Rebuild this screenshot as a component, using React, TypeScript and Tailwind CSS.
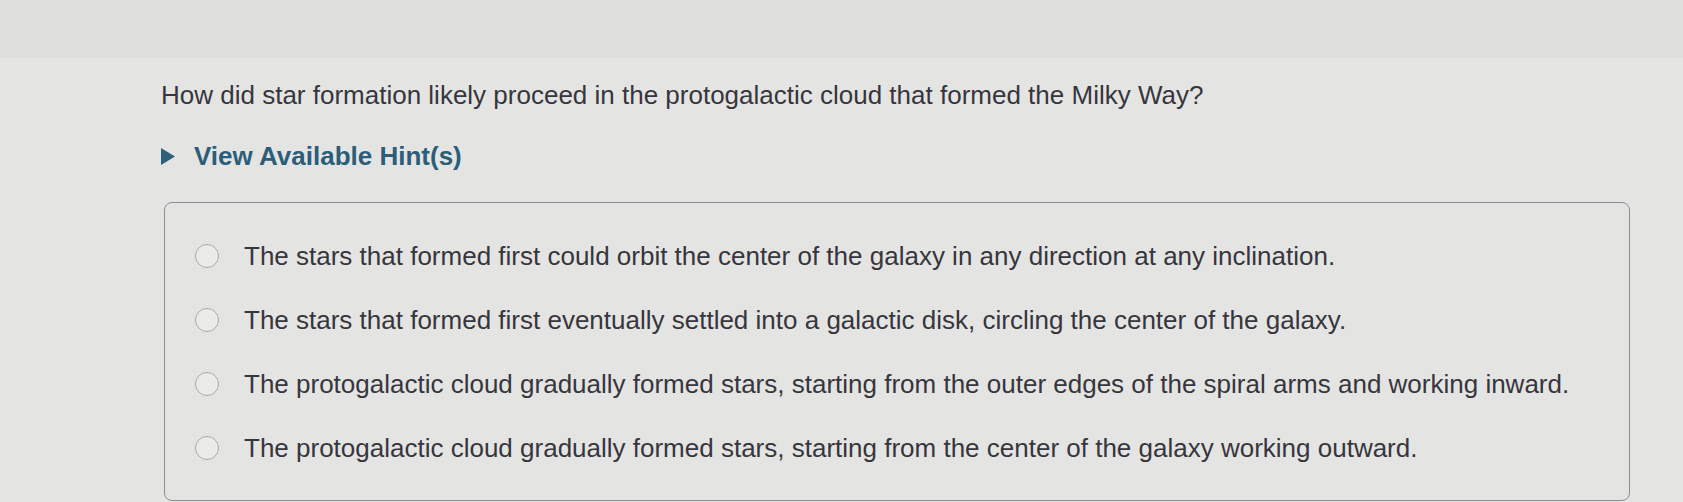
import { useState } from 'react';

const OPTIONS = [
  'The stars that formed first could orbit the center of the galaxy in any direction at any inclination.',
  'The stars that formed first eventually settled into a galactic disk, circling the center of the galaxy.',
  'The protogalactic cloud gradually formed stars, starting from the outer edges of the spiral arms and working inward.',
  'The protogalactic cloud gradually formed stars, starting from the center of the galaxy working outward.',
];

export default function App() {
  const [selected, setSelected] = useState<number | null>(null);
  const [hintsOpen, setHintsOpen] = useState(false);

  return (
    <div className="min-h-[502px] bg-[linear-gradient(to_bottom,#dedfdd_58px,#e4e5e3_58px)] font-['Liberation_Sans',Arial,sans-serif] text-[#37353d]">
      <div className="pl-[161px] pr-[52px] pt-[80px]">
        {/* Question */}
        <p className="text-[26px] leading-[30px]">
          How did star formation likely proceed in the protogalactic cloud that formed the Milky Way?
        </p>

        {/* Hints toggle */}
        <button
          className="mt-[31px] flex items-center gap-[19px] text-[26px] leading-[30px] font-bold text-[#2c5e7a] cursor-pointer"
          onClick={() => setHintsOpen(!hintsOpen)}
        >
          <svg width="14" height="17" viewBox="0 0 14 17" className={hintsOpen ? 'rotate-90' : ''}>
            <path d="M0 0L14 8.5L0 17Z" fill="#2c6179" />
          </svg>
          <span>View Available Hint(s)</span>
        </button>

        {/* Answer choices */}
        <div className="mt-[31px] ml-[3px] w-[1466px] rounded-lg border-[1.5px] border-[#8e8d91] pt-[21px] pb-[20px] pl-[30px]">
          {OPTIONS.map((text, i) => (
            <label key={i} className="flex h-[64px] items-center gap-[25px] cursor-pointer">
              <span
                className="flex h-[24px] w-[24px] shrink-0 items-center justify-center rounded-full border-[1.5px] border-[#aaa9ab] bg-[#ebebea]"
                onClick={() => setSelected(i)}
              >
                {selected === i && <span className="h-[12px] w-[12px] rounded-full bg-[#2c5e7a]" />}
              </span>
              <span className="text-[26px] leading-[30px]">{text}</span>
            </label>
          ))}
        </div>
      </div>
    </div>
  );
}
